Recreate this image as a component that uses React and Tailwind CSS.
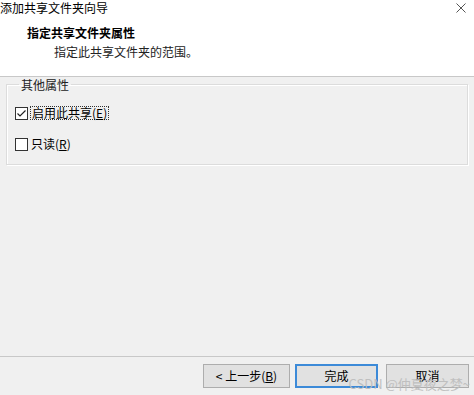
import React from "react";

function Check({ checked }) {
  return (
    <span className="w-[13px] h-[13px] border border-[#333333] bg-white flex items-center justify-center shrink-0">
      {checked && (
        <svg width="11" height="11" viewBox="0 0 11 11">
          <path d="M1.5 5.5 L4 8 L9.5 2.5" fill="none" stroke="#222" strokeWidth="1.2" />
        </svg>
      )}
    </span>
  );
}

function Btn({ children, primary, w }) {
  return (
    <button
      className={
        (primary
          ? "bg-[#e1e1e1] border-2 border-[#3c8ad8] "
          : "bg-[#e1e1e1] border border-[#adadad] ") +
        "h-[24px] text-[12px] text-black flex items-center justify-center " +
        (w === "wide" ? "w-[87px]" : "w-[83px]")
      }
    >
      {children}
    </button>
  );
}

export default function App() {
  return (
    <div
      className="relative w-[474px] h-[395px] bg-[#f0f0f0] flex flex-col text-black overflow-hidden"
      style={{ fontFamily: '"Noto Sans CJK SC", "Noto Sans", sans-serif' }}
    >
      <div className="h-[77px] bg-white border-b border-[#c8c8c8] flex flex-col shrink-0">
        <div className="h-[15px] flex items-center justify-between pr-[8px]">
          <span className="text-[12px] leading-[15px]">添加共享文件夹向导</span>
          <svg width="10" height="10" viewBox="0 0 10 10">
            <path d="M0.5 0.5 L9.5 9.5 M9.5 0.5 L0.5 9.5" stroke="#555" strokeWidth="1" />
          </svg>
        </div>
        <div className="mt-[10px] pl-[27px] text-[12px] leading-[16px] font-bold">指定共享文件夹属性</div>
        <div className="mt-[3px] pl-[54px] text-[12px] leading-[16px] text-[#222]">指定此共享文件夹的范围。</div>
      </div>

      <div className="flex-1 px-[6px]">
        <fieldset className="border border-[#dcdcdc] h-[88px] px-[8px] shadow-[inset_1px_1px_0_#ffffff,1px_1px_0_#ffffff]">
          <legend className="ml-[4px] px-[2px] text-[12px] leading-[15px] text-[#222]">其他属性</legend>
          <div className="flex items-center gap-[2px] mt-[14px]">
            <Check checked />
            <span className="border border-dotted border-[#333] px-[1px] text-[12px] leading-[12px] h-[14px] flex items-center">
              启用此共享(<span className="underline">E</span>)
            </span>
          </div>
          <div className="flex items-center gap-[3px] mt-[17px]">
            <Check />
            <span className="text-[12px] leading-[14px]">
              只读(<span className="underline">R</span>)
            </span>
          </div>
        </fieldset>
      </div>

      <div className="h-[39px] border-t border-[#c8c8c8] flex justify-end items-start pt-[7px] pr-[5px] shrink-0">
        <Btn w="wide">
          &lt; 上一步(<span className="underline">B</span>)
        </Btn>
        <div className="w-[5px]" />
        <Btn primary>完成</Btn>
        <div className="w-[8px]" />
        <Btn>取消</Btn>
      </div>

      <div className="pointer-events-none absolute right-[4px] bottom-[3px] text-[13px] leading-[16px] text-[#bcbcbc] opacity-90">
        CSDN @仲夏夜之梦~
      </div>
    </div>
  );
}
